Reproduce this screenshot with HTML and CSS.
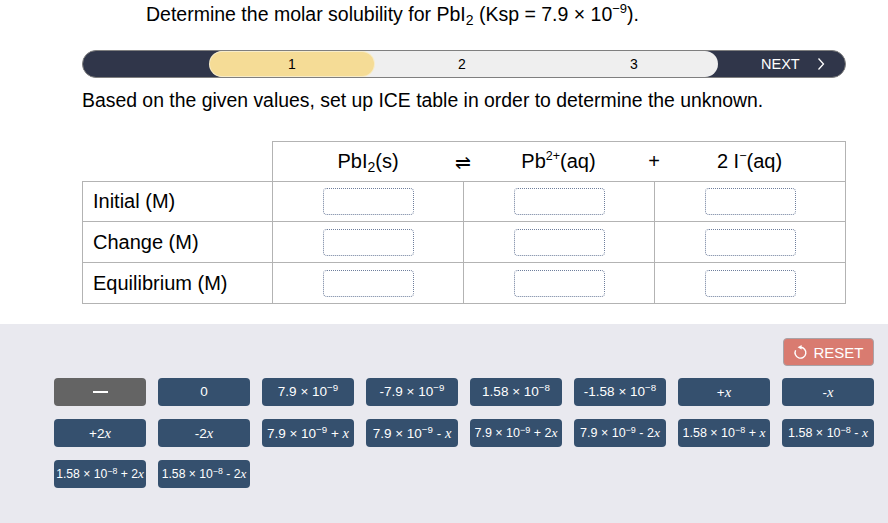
FILE: index.html
```html
<!DOCTYPE html>
<html>
<head>
<meta charset="utf-8">
<link rel="stylesheet" href="styles.css">
</head>
<body>
<div class="page">
  <h1 class="title">Determine the molar solubility for PbI<sub>2</sub> (Ksp = 7.9 × 10<sup>−9</sup>).</h1>

  <div class="progress">
    <div class="track">
      <div class="step step-1 active">1</div>
      <div class="step step-2">2</div>
      <div class="step step-3">3</div>
    </div>
    <div class="next">
      <span>NEXT</span>
      <svg class="chev" width="8" height="14" viewBox="0 0 8 14"><polyline points="1.5,1.5 6.5,7 1.5,12.5" fill="none" stroke="#fff" stroke-width="1.3"/></svg>
    </div>
  </div>

  <p class="prompt">Based on the given values, set up ICE table in order to determine the unknown.</p>

  <div class="ice">
    <div class="corner"></div>
    <div class="head">
      <div class="sp">PbI<sub>2</sub>(s)</div>
      <div class="sym"><span class="eq">⇌</span></div>
      <div class="sp">Pb<sup>2+</sup>(aq)</div>
      <div class="sym"><span>+</span></div>
      <div class="sp">2 I<sup>−</sup>(aq)</div>
    </div>

    <div class="cell label first">Initial (M)</div>
    <div class="cell first"><span class="box"></span></div>
    <div class="cell first"><span class="box"></span></div>
    <div class="cell first last"><span class="box"></span></div>

    <div class="cell label">Change (M)</div>
    <div class="cell"><span class="box"></span></div>
    <div class="cell"><span class="box"></span></div>
    <div class="cell last"><span class="box"></span></div>

    <div class="cell label">Equilibrium (M)</div>
    <div class="cell"><span class="box"></span></div>
    <div class="cell"><span class="box"></span></div>
    <div class="cell last"><span class="box"></span></div>
  </div>

  <div class="panel">
    <div class="reset-row">
      <button class="reset">
        <svg width="15" height="15" viewBox="0 0 15 15"><path d="M7.5 2.3 A5.4 5.4 0 1 1 2.6 5.3" fill="none" stroke="#fff" stroke-width="1.4"/><polygon points="4.6,2.3 8.6,0 8.6,4.6" fill="#fff"/></svg>
        <span>RESET</span>
      </button>
    </div>
    <div class="tiles">
      <div class="tile gray"><span class="dash"></span></div>
      <div class="tile"><span>0</span></div>
      <div class="tile"><span>7.9 × 10<sup>−9</sup></span></div>
      <div class="tile"><span>-7.9 × 10<sup>−9</sup></span></div>
      <div class="tile"><span>1.58 × 10<sup>−8</sup></span></div>
      <div class="tile"><span>-1.58 × 10<sup>−8</sup></span></div>
      <div class="tile"><span>+<i>x</i></span></div>
      <div class="tile"><span>-<i>x</i></span></div>

      <div class="tile"><span>+2<i>x</i></span></div>
      <div class="tile"><span>-2<i>x</i></span></div>
      <div class="tile"><span>7.9 × 10<sup>−9</sup> + <i>x</i></span></div>
      <div class="tile"><span>7.9 × 10<sup>−9</sup> - <i>x</i></span></div>
      <div class="tile sm"><span>7.9 × 10<sup>−9</sup> + 2<i>x</i></span></div>
      <div class="tile sm"><span>7.9 × 10<sup>−9</sup> - 2<i>x</i></span></div>
      <div class="tile sm"><span>1.58 × 10<sup>−8</sup> + <i>x</i></span></div>
      <div class="tile sm"><span>1.58 × 10<sup>−8</sup> - <i>x</i></span></div>

      <div class="tile xs"><span>1.58 × 10<sup>−8</sup> + 2<i>x</i></span></div>
      <div class="tile xs"><span>1.58 × 10<sup>−8</sup> - 2<i>x</i></span></div>
    </div>
  </div>
</div>
</body>
</html>
```

FILE: styles.css
```css
* { box-sizing: border-box; }
html, body { margin: 0; padding: 0; background: #fff; }
body {
  font-family: "Liberation Sans", Arial, sans-serif;
  color: #000;
  width: 888px;
  height: 523px;
  overflow: hidden;
}
.page { display: flex; flex-direction: column; }

.title {
  margin: 3px 0 0 146px;
  font-size: 19.5px;
  line-height: 22px;
  font-weight: normal;
}
.title sup { font-size: 13px; line-height: 0; vertical-align: 8px; }
.title sub, .sp sub { font-size: 14px; line-height: 0; vertical-align: -4px; }

.progress {
  margin: 25px 0 0 82px;
  width: 764px;
  height: 28px;
  border: 1px solid #7f7f7f;
  border-radius: 14px;
  background: #30364a;
  display: flex;
}
.track {
  margin-left: 127px;
  width: 508px;
  background: #efefef;
  border-radius: 13px;
  display: flex;
}
.step {
  display: flex;
  align-items: center;
  justify-content: center;
  font-size: 14px;
  border-radius: 13px;
}
.step-1 { width: 164px; }
.step-2 { width: 176px; }
.step-3 { width: 168px; }
.step.active { background: #f5dc96; margin: 1px 0; box-shadow: 0 0 0 1px #f7ecc9; }
.next {
  flex: 1;
  display: flex;
  align-items: center;
  padding-left: 43px;
  color: #fff;
  font-size: 14.5px;
  gap: 17px;
}
.chev { display: block; }

.prompt {
  margin: 11px 0 0 82px;
  font-size: 19.4px;
  line-height: 22px;
}

.ice {
  margin: 30px 0 0 82px;
  display: grid;
  grid-template-columns: 191px 191px 191px 191px;
  grid-auto-rows: auto;
  font-size: 20px;
}
.corner { border-right: 1px solid #b3b3b3; height: 40px; }
.head {
  grid-column: 2 / 5;
  height: 40px;
  border-top: 1px solid #b3b3b3;
  border-right: 1px solid #b3b3b3;
  display: flex;
  align-items: center;
}
.sp { width: 191px; text-align: center; }
.head .sp:first-child { width: 190px; }
.sp sup { font-size: 12.5px; line-height: 0; vertical-align: 8px; }
.sym { width: 0; display: flex; justify-content: center; }
.sym span { white-space: nowrap; }
.eq { font-family: "DejaVu Sans", sans-serif; font-size: 19px; font-weight: 300; }

.cell {
  height: 41px;
  border-right: 1px solid #b3b3b3;
  border-bottom: 1px solid #b3b3b3;
  display: flex;
  align-items: center;
  justify-content: center;
}
.cell.first { border-top: 1px solid #b3b3b3; height: 41px; }
.cell.label {
  border-left: 1px solid #b3b3b3;
  justify-content: flex-start;
  padding-left: 10px;
}
.box {
  width: 91px;
  height: 27px;
  border: 1px dotted #6e7e9c;
  border-radius: 4px;
  background: #fff;
}

.panel {
  margin-top: 20px;
  height: 201px;
  background: #e9e9ef;
  padding: 14px 14px 0 54px;
}
.reset-row { display: flex; justify-content: flex-end; }
.reset {
  width: 91px;
  height: 28px;
  background: #d97b70;
  border: 1px solid #a9a2a6;
  border-radius: 4px;
  color: #fff;
  font-family: "Liberation Sans", Arial, sans-serif;
  font-size: 15px;
  display: flex;
  align-items: center;
  justify-content: center;
  gap: 5px;
  padding: 0;
}
.reset svg { display: block; }

.tiles {
  margin-top: 12px;
  display: grid;
  grid-template-columns: repeat(8, 92px);
  column-gap: 12px;
  row-gap: 13px;
}
.tile {
  height: 28px;
  background: #35506e;
  border-radius: 4px;
  color: #fff;
  font-size: 13.5px;
  display: flex;
  align-items: center;
  justify-content: center;
  white-space: nowrap;
}
.tile > span { display: block; line-height: 16px; }
.tile.sm { font-size: 12.5px; }
.tile.xs { font-size: 12.2px; }
.tile sup { font-size: 0.72em; line-height: 0; vertical-align: 0.5em; }
.tile i { font-family: "Liberation Serif", serif; font-size: 1.08em; }
.tile.gray { background: #646464; }
.dash { width: 15px; height: 2px; background: #fff; display: block; }
```
